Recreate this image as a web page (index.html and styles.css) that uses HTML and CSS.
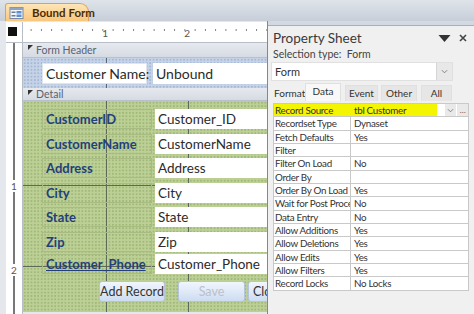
FILE: index.html
```html
<!DOCTYPE html>
<html lang="en">
<head>
  <meta charset="UTF-8">
  <meta name="viewport" content="width=device-width, initial-scale=1.0">
  <title>Bound Form - Design View</title>
  <link rel="stylesheet" href="styles.css">
</head>
<body>
  <div class="tabstrip">
    <div class="doc-tab">
      <svg class="doc-icon" viewBox="0 0 14 12" xmlns="http://www.w3.org/2000/svg">
        <rect x="0.5" y="0.5" width="13" height="11" fill="#f4f6fa" stroke="#7b8aa3"/>
        <rect x="0.5" y="0.5" width="13" height="2.5" fill="#8fa3c4"/>
        <rect x="2" y="4.5" width="4" height="1.5" fill="#6b7d99"/>
        <rect x="7" y="4" width="5" height="2.5" fill="#5b8fd6"/>
        <rect x="2" y="8" width="4" height="1.5" fill="#6b7d99"/>
        <rect x="7" y="7.5" width="5" height="2.5" fill="#5b8fd6"/>
      </svg>
      <span>Bound Form</span>
    </div>
  </div>

  <div class="workspace">
    <section class="designer">
      <div class="corner"><span class="selector"></span></div>
      <div class="hruler">
        <span class="mark">1</span>
        <span class="mark">2</span>
      </div>
      <div class="vruler">
        <span class="vmark">1</span>
        <span class="vmark">2</span>
      </div>

      <div class="canvas">
        <div class="band"><span class="band-grip"></span>Form Header</div>
        <div class="section header-section">
          <div class="label plain">Customer Name:</div>
          <div class="textbox">Unbound</div>
        </div>

        <div class="band"><span class="band-grip"></span>Detail</div>
        <div class="section detail-section">
          <div class="field-row">
            <div class="label">CustomerID</div>
            <div class="textbox">Customer_ID</div>
          </div>
          <div class="field-row">
            <div class="label">CustomerName</div>
            <div class="textbox">CustomerName</div>
          </div>
          <div class="field-row">
            <div class="label">Address</div>
            <div class="textbox">Address</div>
          </div>
          <div class="field-row">
            <div class="label">City</div>
            <div class="textbox">City</div>
          </div>
          <div class="field-row">
            <div class="label">State</div>
            <div class="textbox">State</div>
          </div>
          <div class="field-row">
            <div class="label">Zip</div>
            <div class="textbox">Zip</div>
          </div>
          <div class="field-row tight">
            <div class="label underline">Customer_Phone</div>
            <div class="textbox">Customer_Phone</div>
          </div>

          <div class="button-row">
            <button type="button" class="form-button add">Add Record</button>
            <button type="button" class="form-button save" disabled>Save</button>
            <button type="button" class="form-button close">Close</button>
          </div>
        </div>
      </div>
    </section>

    <aside class="props">
      <div class="props-title">
        <span>Property Sheet</span>
        <span class="props-tools">
          <svg class="tri" viewBox="0 0 12 7" xmlns="http://www.w3.org/2000/svg"><path d="M0 0H12L6 7Z" fill="#333"/></svg>
          <svg class="x" viewBox="0 0 8 8" xmlns="http://www.w3.org/2000/svg"><path d="M1 1L7 7M7 1L1 7" stroke="#444" stroke-width="1.6"/></svg>
        </span>
      </div>
      <div class="selection-type">Selection type:&nbsp; Form</div>
      <div class="combo">
        <span>Form</span>
        <span class="combo-btn"><svg viewBox="0 0 8 5" xmlns="http://www.w3.org/2000/svg"><path d="M1 1L4 4L7 1" fill="none" stroke="#777" stroke-width="1"/></svg></span>
      </div>
      <div class="tabs">
        <span class="tab format">Format</span>
        <span class="tab active">Data</span>
        <span class="tab event">Event</span>
        <span class="tab other">Other</span>
        <span class="tab all">All</span>
      </div>
      <div class="grid">
        <div class="prop highlighted">
          <span class="name">Record Source</span>
          <span class="value">tbl Customer</span>
          <span class="prop-btns">
            <span class="mini">
              <svg viewBox="0 0 8 5" xmlns="http://www.w3.org/2000/svg"><path d="M1 1L4 4L7 1" fill="none" stroke="#777" stroke-width="1"/></svg>
            </span>
            <span class="mini dots">&hellip;</span>
          </span>
        </div>
        <div class="prop"><span class="name">Recordset Type</span><span class="value">Dynaset</span></div>
        <div class="prop"><span class="name">Fetch Defaults</span><span class="value">Yes</span></div>
        <div class="prop"><span class="name">Filter</span><span class="value"></span></div>
        <div class="prop"><span class="name">Filter On Load</span><span class="value">No</span></div>
        <div class="prop"><span class="name">Order By</span><span class="value"></span></div>
        <div class="prop"><span class="name">Order By On Load</span><span class="value">Yes</span></div>
        <div class="prop"><span class="name">Wait for Post Proce</span><span class="value">No</span></div>
        <div class="prop"><span class="name">Data Entry</span><span class="value">No</span></div>
        <div class="prop"><span class="name">Allow Additions</span><span class="value">Yes</span></div>
        <div class="prop"><span class="name">Allow Deletions</span><span class="value">Yes</span></div>
        <div class="prop"><span class="name">Allow Edits</span><span class="value">Yes</span></div>
        <div class="prop"><span class="name">Allow Filters</span><span class="value">Yes</span></div>
        <div class="prop"><span class="name">Record Locks</span><span class="value">No Locks</span></div>
      </div>
    </aside>
  </div>
</body>
</html>
```

FILE: styles.css
```css
/* Access design view - colours taken from the screenshot */
:root {
  --frame-bg: #d3d9e2;
  --ruler-bg: #ffffff;
  --header-bg: #c6d3e6;
  --header-dot: #a4b8d6;
  --detail-bg: #bccf95;
  --detail-dot: #9fb878;
  --grid-line: #5d6a55;
  --label-text: #243f7c;
  --text: #333333;
  --props-bg: #f0f0f0;
  --cell-border: #c9c9c9;
  --highlight: #f4f500;

  --font-ui: Lato, "Open Sans", "Liberation Sans", sans-serif;
}

* {
  box-sizing: border-box;
  margin: 0;
  padding: 0;
}

body {
  width: 474px;
  height: 314px;
  overflow: hidden;
  font-family: var(--font-ui);
  color: var(--text);
  background: var(--frame-bg);
  display: flex;
  flex-direction: column;
  white-space: nowrap;
}

/* Document tab strip */
.tabstrip {
  height: 21px;
  flex-shrink: 0;
  padding: 3px 0 0 5px;
  background: linear-gradient(#dfe4eb, #c7ced8);
  display: flex;
  align-items: flex-end;
}

.doc-tab {
  width: 84px;
  height: 18px;
  display: flex;
  align-items: center;
  gap: 8px;
  padding-left: 3px;
  font-size: 11.5px;
  font-weight: 700;
  color: #4b2c08;
  background: linear-gradient(#fde6b8, #f9c67c);
  border: 1px solid #d8a45c;
  border-bottom: none;
  border-radius: 3px 9px 0 0;
}

.doc-icon {
  width: 15px;
  height: 12px;
  flex-shrink: 0;
}

/* Main area: designer + property sheet */
.workspace {
  flex: 1;
  display: flex;
  min-height: 0;
}

.designer {
  width: 268px;
  flex-shrink: 0;
  display: grid;
  grid-template-columns: 17px 1fr;
  grid-template-rows: 21px 1fr;
  padding: 1px 0 0 6px;
  background: #e4e7ec;
  border-right: 1px solid #7f8896;
  overflow: hidden;
}

.corner {
  background: var(--ruler-bg);
  border-right: 1px solid #b8bec8;
  border-bottom: 1px solid #b8bec8;
  padding: 5px 0 0 2px;
}

.selector {
  display: block;
  width: 9px;
  height: 9px;
  background: #111;
}

.hruler {
  background-color: var(--ruler-bg);
  background-image: radial-gradient(circle, #777 0.6px, transparent 0.9px);
  background-size: 10.25px 4px;
  background-position: 3px 6px;
  background-repeat: repeat-x;
  border-bottom: 1px solid #b8bec8;
  display: flex;
  font-size: 10px;
  color: #555;
}

.mark {
  width: 82px;
  text-align: right;
  padding-top: 4px;
  line-height: 14px;
}

.mark:first-child {
  width: 85px;
}

.vruler {
  background-color: var(--ruler-bg);
  background-image: linear-gradient(90deg, transparent 7px, #777 7px, #777 9px, transparent 9px);
  background-size: 16px 10.25px;
  background-position: 0 18px;
  background-repeat: repeat-y;
  border-right: 1px solid #b8bec8;
  display: flex;
  flex-direction: column;
  align-items: center;
  font-size: 10px;
  color: #555;
}

.vmark {
  background: var(--ruler-bg);
  line-height: 12px;
  margin-top: 137px;
}

.vmark + .vmark {
  margin-top: 72px;
}

/* Form canvas */
.canvas {
  display: flex;
  flex-direction: column;
  overflow: hidden;
  min-width: 0;
}

.band {
  height: 15px;
  flex-shrink: 0;
  display: flex;
  align-items: center;
  gap: 3px;
  padding-left: 5px;
  font-size: 10.5px;
  color: #5a6270;
  background: linear-gradient(#e6e9ee, #d6dbe3);
  border-bottom: 1px solid #b9c0cc;
}

.band:nth-of-type(3) {
  height: 13px;
}

.band-grip {
  width: 5px;
  height: 5px;
  background: #333;
  clip-path: polygon(0 0, 100% 0, 0 100%);
  align-self: flex-start;
  margin-top: 2px;
}

.section {
  flex-shrink: 0;
  width: 100%;
}

.header-section {
  height: 30px;
  display: flex;
  align-items: center;
  gap: 6px;
  padding-left: 19px;
  background-color: var(--header-bg);
  background-image:
    linear-gradient(#56657a, #56657a),
    radial-gradient(circle, var(--header-dot) 0.8px, transparent 1px);
  background-size: 1px 100%, 3.4px 3.4px;
  background-position: 83px 0, 0 0;
  background-repeat: no-repeat, repeat;
}

.detail-section {
  height: 211px;
  display: flex;
  flex-direction: column;
  padding: 8px 0 0 19px;
  background-color: var(--detail-bg);
  background-image:
    linear-gradient(var(--grid-line), var(--grid-line)),
    linear-gradient(var(--grid-line), var(--grid-line)),
    linear-gradient(var(--grid-line), var(--grid-line)),
    linear-gradient(var(--grid-line), var(--grid-line)),
    radial-gradient(circle, var(--detail-dot) 0.8px, transparent 1px);
  background-size: 1px 100%, 1px 100%, 100% 1px, 100% 1px, 3.4px 3.4px;
  background-position: 83px 0, 165px 0, 0 84px, 0 165px, 0 0;
  background-repeat: no-repeat, no-repeat, no-repeat, no-repeat, repeat;
}

.label {
  width: 110px;
  height: 20px;
  flex-shrink: 0;
  display: flex;
  align-items: center;
  padding-left: 3px;
  font-size: 13px;
  font-weight: 700;
  color: var(--label-text);
  border: 1px solid #a7bb83;
}

.label.plain {
  width: 105px;
  height: 21px;
  padding-left: 3px;
  font-weight: 400;
  font-size: 14px;
  color: #2a2a2a;
  background: #fff;
  border-color: #dfe5ee;
}

.label.underline {
  text-decoration: underline;
  text-decoration-thickness: 1px;
  text-underline-offset: 1px;
}

.textbox {
  width: 140px;
  height: 20px;
  flex-shrink: 0;
  display: flex;
  align-items: center;
  padding-left: 3px;
  font-size: 13.5px;
  color: #2b2b2b;
  background: #fff;
}

.header-section .textbox {
  height: 21px;
  font-size: 14px;
}

.field-row {
  display: flex;
  gap: 3px;
  height: 20px;
  margin-bottom: 4.6px;
}

.field-row.tight {
  margin-top: -3px;
}

.button-row {
  display: flex;
  margin-top: 3px;
  padding-left: 57px;
}

.form-button {
  height: 21px;
  font-family: var(--font-ui);
  font-size: 12.5px;
  color: #333;
  background: linear-gradient(#f1f6fd, #cddcf1);
  border: 1px solid #b3c4dc;
  border-radius: 3px;
  flex-shrink: 0;
}

.form-button.add {
  width: 66px;
}

.form-button.save {
  width: 67px;
  margin-left: 13px;
  color: #b9c1cc;
}

.form-button.close {
  width: 60px;
  margin-left: 3px;
  text-align: left;
  padding-left: 4px;
}

/* Property sheet */
.props {
  flex: 1;
  margin-top: 4px;
  display: flex;
  flex-direction: column;
  padding: 0 5px 0 3px;
  background: var(--props-bg);
  border-top: 1px solid #a9b0ba;
  font-size: 10px;
}

.props-title {
  height: 22px;
  display: flex;
  align-items: center;
  justify-content: space-between;
  padding: 2px 0 0 2px;
  font-size: 13.5px;
  color: #3a3a3a;
}

.props-tools {
  display: flex;
  align-items: center;
  gap: 8px;
  padding-right: 2px;
}

.props-tools .tri {
  width: 13px;
  height: 7px;
}

.props-tools .x {
  width: 8px;
  height: 8px;
}

.selection-type {
  height: 12px;
  padding-left: 2px;
  line-height: 12px;
  font-size: 10.5px;
  color: #444;
}

.combo {
  height: 19px;
  margin: 2px 16px 0 0;
  display: flex;
  align-items: center;
  justify-content: space-between;
  padding-left: 3px;
  font-size: 11px;
  background: #fff;
  border: 1px solid #e0e0e0;
}

.combo-btn {
  width: 16px;
  height: 17px;
  display: flex;
  align-items: center;
  justify-content: center;
  background: #e8e8e8;
  border-left: 1px solid #d6d6d6;
}

.combo-btn svg,
.mini svg {
  width: 7px;
  height: 5px;
}

.tabs {
  height: 18px;
  margin-top: 2px;
  display: flex;
  align-items: flex-end;
  font-size: 10px;
  color: #333;
}

.tab {
  height: 16px;
  line-height: 15px;
  text-align: center;
  background: #e6e6e6;
  border: 1px solid #e0e0e0;
  border-bottom: none;
}

.tab.format {
  width: 34px;
  text-align: left;
  padding-left: 2px;
  background: transparent;
  border-color: transparent;
}

.tab.active {
  width: 36px;
  height: 18px;
  line-height: 14px;
  background: #f8f8f8;
}

.tab.event {
  width: 33px;
  margin-left: 4px;
}

.tab.other {
  width: 36px;
  margin-left: 3px;
}

.tab.all {
  width: 31px;
  margin-left: 4px;
}

.grid {
  margin: 2px 0 0 2px;
  background: #fff;
  border: 1px solid var(--cell-border);
  border-bottom: none;
}

.prop {
  height: 13.35px;
  display: grid;
  grid-template-columns: 77px 1fr;
  border-bottom: 1px solid var(--cell-border);
  line-height: 12px;
  font-size: 9.8px;
  letter-spacing: -0.3px;
  overflow: hidden;
}

.prop .name {
  padding-left: 1px;
  overflow: hidden;
  border-right: 1px solid var(--cell-border);
}

.prop .value {
  padding-left: 3px;
  overflow: hidden;
}

.prop.highlighted {
  grid-template-columns: 77px 1fr auto;
  background: linear-gradient(90deg, var(--highlight) 0, var(--highlight) 84%, #fff 84%);
}

.prop.highlighted .name {
  border-right-color: transparent;
}

.prop-btns {
  display: flex;
  gap: 1px;
}

.mini {
  width: 11px;
  height: 12px;
  display: flex;
  align-items: center;
  justify-content: center;
  background: #e9e9e9;
  font-size: 8px;
  color: #555;
}
```
